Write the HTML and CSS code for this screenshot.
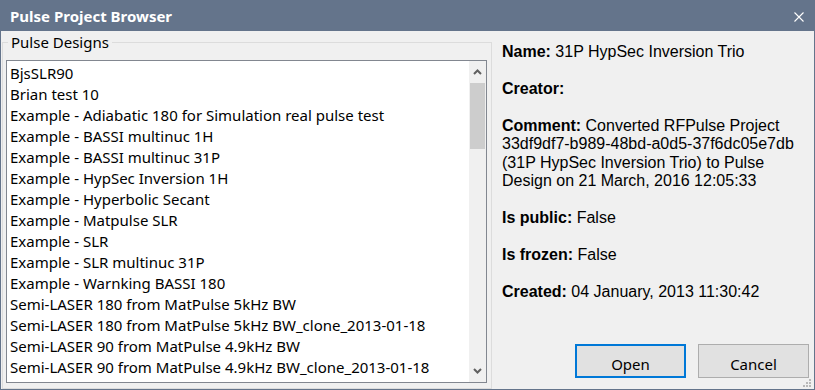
FILE: index.html
```html
<!DOCTYPE html>
<html lang="en">
<head>
    <meta charset="UTF-8">
    <title>Pulse Project Browser</title>
    <link rel="stylesheet" href="styles.css">
</head>
<body>
    <div class="window">
        <div class="titlebar">
            <span class="title">Pulse Project Browser</span>
            <svg class="close" width="10" height="10" viewBox="0 0 10 10">
                <path d="M0.5 0.5 L9.5 9.5 M9.5 0.5 L0.5 9.5" stroke="#fff" stroke-width="1.1" fill="none"/>
            </svg>
        </div>
        <div class="main">
            <fieldset class="designs">
                <legend>Pulse Designs</legend>
                <div class="listbox">
                    <ul class="items">
                        <li>BjsSLR90</li>
                        <li>Brian test 10</li>
                        <li>Example - Adiabatic 180 for Simulation real pulse test</li>
                        <li>Example - BASSI multinuc 1H</li>
                        <li>Example - BASSI multinuc 31P</li>
                        <li>Example - HypSec Inversion 1H</li>
                        <li>Example - Hyperbolic Secant</li>
                        <li>Example - Matpulse SLR</li>
                        <li>Example - SLR</li>
                        <li>Example - SLR multinuc 31P</li>
                        <li>Example - Warnking BASSI 180</li>
                        <li>Semi-LASER 180 from MatPulse 5kHz BW</li>
                        <li>Semi-LASER 180 from MatPulse 5kHz BW_clone_2013-01-18</li>
                        <li>Semi-LASER 90 from MatPulse 4.9kHz BW</li>
                        <li>Semi-LASER 90 from MatPulse 4.9kHz BW_clone_2013-01-18</li>
                    </ul>
                    <div class="scrollbar">
                        <div class="sb-btn">
                            <svg width="9" height="6" viewBox="0 0 9 6"><path d="M1 5 L4.5 1.5 L8 5" stroke="#606060" stroke-width="2" fill="none"/></svg>
                        </div>
                        <div class="sb-track"><div class="sb-thumb"></div></div>
                        <div class="sb-btn">
                            <svg width="9" height="6" viewBox="0 0 9 6"><path d="M1 1 L4.5 4.5 L8 1" stroke="#606060" stroke-width="2" fill="none"/></svg>
                        </div>
                    </div>
                </div>
            </fieldset>
            <div class="details">
                <div class="info">
                    <p><b>Name:</b> 31P HypSec Inversion Trio</p>
                    <p><b>Creator:</b></p>
                    <p><b>Comment:</b> Converted RFPulse Project 33df9df7-b989-48bd-a0d5-37f6dc05e7db (31P HypSec Inversion Trio) to Pulse Design on 21 March, 2016 12:05:33</p>
                    <p><b>Is public:</b> False</p>
                    <p><b>Is frozen:</b> False</p>
                    <p><b>Created:</b> 04 January, 2013 11:30:42</p>
                </div>
                <div class="buttons">
                    <button class="btn default">Open</button>
                    <button class="btn">Cancel</button>
                </div>
            </div>
        </div>
        <svg class="grip" width="8" height="8" viewBox="0 0 8 8">
            <rect x="6" y="0" width="2" height="2" fill="#b8b8b8"/>
            <rect x="3" y="3" width="2" height="2" fill="#b8b8b8"/>
            <rect x="6" y="3" width="2" height="2" fill="#b8b8b8"/>
            <rect x="0" y="6" width="2" height="2" fill="#b8b8b8"/>
            <rect x="3" y="6" width="2" height="2" fill="#b8b8b8"/>
            <rect x="6" y="6" width="2" height="2" fill="#b8b8b8"/>
        </svg>
    </div>
</body>
</html>
```

FILE: styles.css
```css
* {
    box-sizing: border-box;
}

body {
    margin: 0;
    background-color: #f0f0f0;
    font-family: 'Noto Sans', sans-serif;
}

.window {
    position: relative;
    width: 815px;
    height: 390px;
    border: 1px solid #64748b;
    background-color: #f0f0f0;
    overflow: hidden;
}

.titlebar {
    height: 30px;
    background-color: #64748b;
    display: flex;
    align-items: center;
    justify-content: space-between;
    padding: 0 10px 0 9px;
}

.title {
    color: #fff;
    font-weight: 700;
    font-size: 15px;
}

.close {
    display: block;
    margin-top: 1px;
}

.main {
    display: flex;
    height: 358px;
}

/* group box */
.designs {
    margin: 1px 0 0 1px;
    padding: 8px 4px 3px 3px;
    border: 1px solid #dcdcdc;
    width: 490px;
    min-width: 0;
}

.designs legend {
    font-size: 15px;
    line-height: 20px;
    padding: 0 3px;
    margin-left: 2px;
    color: #000;
}

.listbox {
    display: flex;
    height: 323px;
    border: 1px solid #828790;
    background-color: #fff;
}

.items {
    flex: 1;
    list-style: none;
    margin: 0;
    padding: 2px 0 0 3px;
    overflow: hidden;
    font-size: 15px;
    line-height: 21px;
    color: #000;
    white-space: nowrap;
}

.scrollbar {
    width: 17px;
    display: flex;
    flex-direction: column;
    background-color: #f0f0f0;
}

.sb-btn {
    height: 22px;
    display: flex;
    align-items: center;
    justify-content: center;
}

.sb-btn svg {
    display: block;
}

.sb-track {
    flex: 1;
    padding: 0 1px;
}

.sb-thumb {
    height: 66px;
    background-color: #cdcdcd;
}

/* right side */
.details {
    flex: 1;
    display: flex;
    flex-direction: column;
    justify-content: space-between;
    padding: 12px 5px 11px 10px;
    font-family: 'Liberation Sans', Arial, sans-serif;
    font-size: 16px;
    color: #000;
}

.info p {
    margin: 0 0 18.6px;
    line-height: 18.4px;
}

.buttons {
    display: flex;
    justify-content: flex-end;
    gap: 12px;
}

.btn {
    width: 111px;
    height: 34px;
    background-color: #e1e1e1;
    border: 1px solid #adadad;
    font-family: 'Noto Sans', sans-serif;
    font-size: 15px;
    color: #000;
    padding: 6px 0 0;
}

.btn.default {
    border: 2px solid #0078d7;
}

.grip {
    position: absolute;
    right: 3px;
    bottom: 2px;
}
```
